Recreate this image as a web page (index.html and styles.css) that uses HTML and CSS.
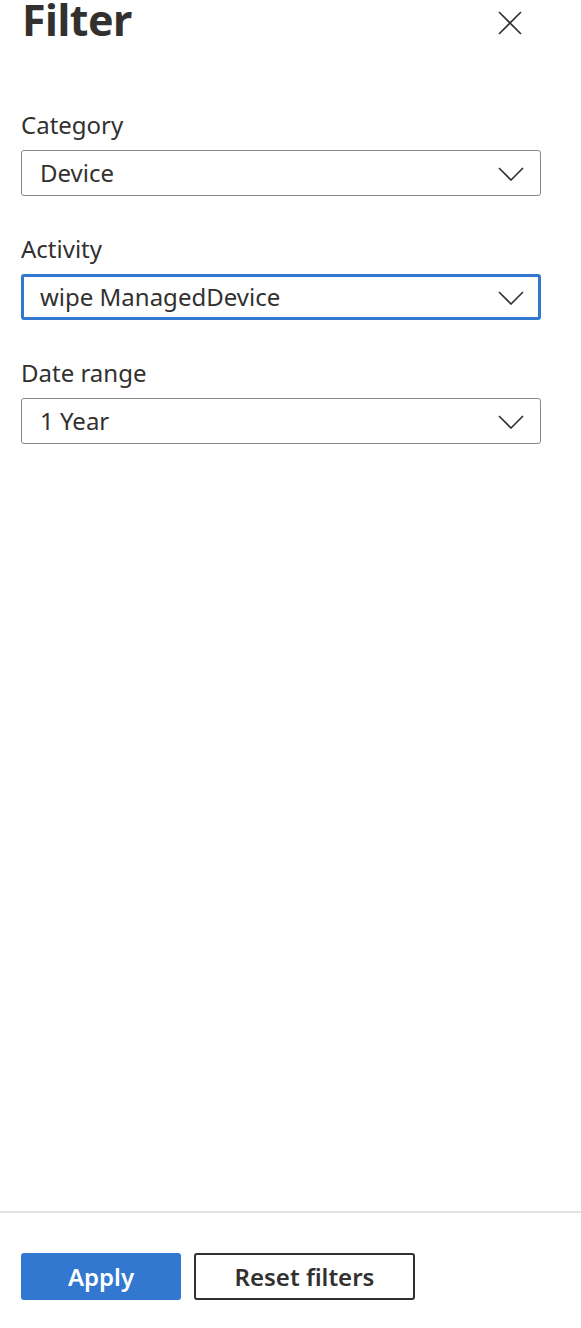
FILE: index.html
```html
<!DOCTYPE html>
<html lang="en">
<head>
<meta charset="utf-8">
<title>Filter</title>
<link rel="stylesheet" href="styles.css">
</head>
<body>
<div class="panel">
  <div class="content">
    <header class="header">
      <h1 class="title">Filter</h1>
      <button class="close" aria-label="Close">
        <svg width="24" height="24" viewBox="0 0 24 24"><path d="M1 1 L23 23 M23 1 L1 23" stroke="#323130" stroke-width="1.6" fill="none"/></svg>
      </button>
    </header>

    <div class="field">
      <label class="label">Category</label>
      <div class="select">
        <span class="value">Device</span>
        <svg class="chev" width="26" height="14" viewBox="0 0 26 14"><path d="M1 1 L13 13 L25 1" stroke="#323130" stroke-width="1.6" fill="none"/></svg>
      </div>
    </div>

    <div class="field">
      <label class="label">Activity</label>
      <div class="select focused">
        <span class="value">wipe ManagedDevice</span>
        <svg class="chev" width="26" height="14" viewBox="0 0 26 14"><path d="M1 1 L13 13 L25 1" stroke="#323130" stroke-width="1.6" fill="none"/></svg>
      </div>
    </div>

    <div class="field">
      <label class="label">Date range</label>
      <div class="select">
        <span class="value">1 Year</span>
        <svg class="chev" width="26" height="14" viewBox="0 0 26 14"><path d="M1 1 L13 13 L25 1" stroke="#323130" stroke-width="1.6" fill="none"/></svg>
      </div>
    </div>
  </div>

  <footer class="footer">
    <button class="btn primary">Apply</button>
    <button class="btn secondary">Reset filters</button>
  </footer>
</div>
</body>
</html>
```

FILE: styles.css
```css
* { box-sizing: border-box; }
html, body {
  margin: 0;
  padding: 0;
  background: #ffffff;
}
body {
  font-family: "Noto Sans", "Open Sans", sans-serif;
  color: #323130;
}
.panel {
  height: 1328px;
  display: flex;
  flex-direction: column;
}
.content {
  flex: 1;
  padding: 0 40px 0 21px;
}
.header {
  display: flex;
  justify-content: space-between;
  align-items: flex-start;
  height: 110px;
}
.title {
  margin: 0;
  font-size: 43px;
  font-weight: 700;
  line-height: 40px;
  letter-spacing: -0.5px;
  padding-left: 1px;
}
.close {
  border: none;
  background: none;
  padding: 0;
  margin-top: 11px;
  margin-right: 19px;
  width: 24px;
  height: 24px;
  cursor: pointer;
}
.close svg { display: block; }
.field + .field {
  margin-top: 38px;
}
.label {
  display: block;
  font-size: 24px;
  line-height: 30px;
  height: 40px;
}
.select {
  height: 46px;
  border: 1px solid #8a8886;
  border-radius: 3px;
  display: flex;
  align-items: center;
  justify-content: space-between;
  padding: 0 16px 0 18px;
}
.select.focused {
  border: 3px solid #3278d1;
  padding: 0 14px 0 16px;
}
.value {
  font-size: 24px;
  line-height: 30px;
}
.chev { display: block; margin-top: 2px; }
.footer {
  border-top: 2px solid #e1e1e1;
  padding: 40px 21px 28px;
  display: flex;
  gap: 13px;
  flex: none;
  height: 117px;
}
.btn {
  height: 47px;
  font-family: "Noto Sans", "Open Sans", sans-serif;
  font-size: 24px;
  font-weight: 600;
  border-radius: 3px;
  cursor: pointer;
  padding: 0;
}
.primary {
  width: 160px;
  background: #3278d1;
  color: #ffffff;
  border: none;
}
.secondary {
  width: 221px;
  background: #ffffff;
  color: #323130;
  border: 2px solid #323130;
}
```
